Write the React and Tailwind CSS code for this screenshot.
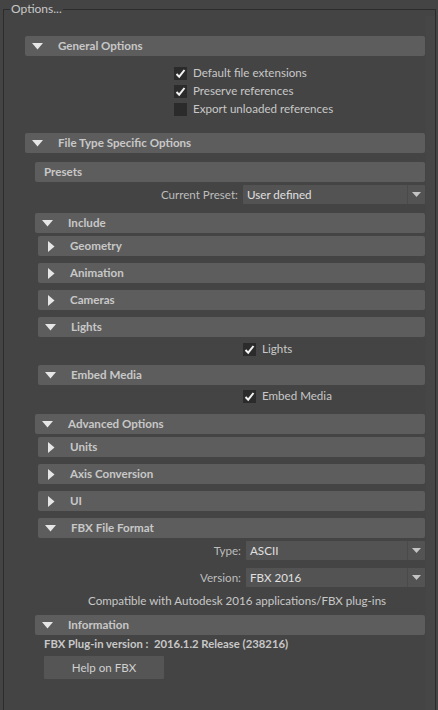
const FONT = { fontFamily: "Lato, 'Open Sans', 'Liberation Sans', sans-serif" };

function DownArrow() {
  return (
    <svg width="11" height="7" viewBox="0 0 11 7" className="shrink-0">
      <polygon points="0,0 11,0 5.5,6.5" fill="#e6e6e6" />
    </svg>
  );
}

function RightArrow() {
  return (
    <svg width="7" height="11" viewBox="0 0 7 11" className="shrink-0">
      <polygon points="0,0 6.5,5.5 0,11" fill="#e6e6e6" />
    </svg>
  );
}

function Header({ title, open, plain, className = "" }) {
  return (
    <div className={`flex h-[20px] items-center rounded-[2px] bg-[#5d5d5d] ${className}`}>
      {plain ? (
        <span className="pl-[9px] text-[11.6px] font-bold text-[#c8c8c8]">{title}</span>
      ) : open ? (
        <>
          <span className="pl-[7px]"><DownArrow /></span>
          <span className="pl-[15px] text-[11.6px] font-bold text-[#c8c8c8]">{title}</span>
        </>
      ) : (
        <>
          <span className="pl-[10px]"><RightArrow /></span>
          <span className="pl-[15px] text-[11.6px] font-bold text-[#c8c8c8]">{title}</span>
        </>
      )}
    </div>
  );
}

function CheckBox({ checked }) {
  return (
    <div className="flex h-[13px] w-[13px] shrink-0 items-center justify-center bg-[#2b2b2b]">
      {checked && (
        <svg width="11" height="11" viewBox="0 0 11 11">
          <polyline points="1.5,6 4.2,8.7 9.5,2" fill="none" stroke="#f2f2f2" strokeWidth="2" />
        </svg>
      )}
    </div>
  );
}

function CheckRow({ label, checked, indent }) {
  return (
    <div className={`flex h-[18px] items-center ${indent}`}>
      <CheckBox checked={checked} />
      <span className="pl-[6px] text-[11.6px] text-[#c8c8c8]">{label}</span>
    </div>
  );
}

function Dropdown({ label, value, labelWidth, className = "" }) {
  return (
    <div className={`flex h-[19px] items-center ${className}`}>
      <span className={`${labelWidth} shrink-0 pr-[5px] text-right text-[11.6px] text-[#bdbdbd]`}>{label}</span>
      <div className="flex h-full flex-1 items-center rounded-[1px] bg-[#535353]">
        <span className="flex-1 pl-[4px] text-[11.6px] text-[#e0e0e0]">{value}</span>
        <div className="flex h-full w-[18px] items-center justify-center border-l border-[#4a4a4a]">
          <svg width="9" height="5" viewBox="0 0 9 5">
            <polygon points="0,0 9,0 4.5,5" fill="#c4c4c4" />
          </svg>
        </div>
      </div>
    </div>
  );
}

export default function App() {
  return (
    <div className="h-[710px] w-[438px] overflow-hidden bg-[#444444]" style={FONT}>
      <fieldset className="ml-[3px] mt-[2px] h-[730px] w-[433px] border border-[#2c2c2c]">
        <legend className="ml-[6px] px-[1px] text-[12px] leading-[14px] text-[#c8c8c8]">Options...</legend>
        <div className="flex">
          <div className="w-[400px] ml-[21px]">
            <Header title="General Options" open className="mt-[20px]" />
            <div className="mt-[8px]">
              <CheckRow label="Default file extensions" checked indent="pl-[149px]" />
              <CheckRow label="Preserve references" checked indent="pl-[149px]" />
              <CheckRow label="Export unloaded references" indent="pl-[149px]" />
            </div>

            <Header title="File Type Specific Options" open className="mt-[15px]" />
            <div className="pl-[10px]">
              <Header title="Presets" plain className="mt-[9px]" />
              <Dropdown label="Current Preset:" value="User defined" labelWidth="w-[208px]" className="mt-[3px]" />

              <Header title="Include" open className="mt-[9px]" />
              <div className="pl-[3px]">
                <Header title="Geometry" className="mt-[3px]" />
                <Header title="Animation" className="mt-[7px]" />
                <Header title="Cameras" className="mt-[7px]" />
                <Header title="Lights" open className="mt-[7px]" />
                <div className="mt-[3px]">
                  <CheckRow label="Lights" checked indent="pl-[205px]" />
                </div>
                <Header title="Embed Media" open className="mt-[7px]" />
                <div className="mt-[2px]">
                  <CheckRow label="Embed Media" checked indent="pl-[205px]" />
                </div>
              </div>

              <Header title="Advanced Options" open className="mt-[9px]" />
              <div className="pl-[3px]">
                <Header title="Units" className="mt-[3px]" />
                <Header title="Axis Conversion" className="mt-[7px]" />
                <Header title="UI" className="mt-[7px]" />
                <Header title="FBX File Format" open className="mt-[7px]" />
                <Dropdown label="Type:" value="ASCII" labelWidth="w-[208px]" className="mt-[3px]" />
                <Dropdown label="Version:" value="FBX 2016" labelWidth="w-[208px]" className="mt-[8px]" />
                <div className="mt-[5px] flex h-[18px] items-center pl-[50px] text-[11.6px] text-[#c8c8c8]">
                  Compatible with Autodesk 2016 applications/FBX plug-ins
                </div>
              </div>

              <Header title="Information" open className="mt-[5px]" />
              <div className="flex h-[18px] items-center pl-[9px] text-[11.3px] font-bold text-[#c8c8c8]">
                FBX Plug-in version :&nbsp; 2016.1.2 Release (238216)
              </div>
              <button className="ml-[9px] mt-[3px] flex h-[23px] w-[120px] items-center justify-center rounded-[1px] bg-[#555555] text-[11.6px] text-[#d0d0d0]">
                Help on FBX
              </button>
            </div>
          </div>
          <div className="ml-auto h-[720px] w-[9px] bg-[#464646]" />
        </div>
      </fieldset>
    </div>
  );
}
